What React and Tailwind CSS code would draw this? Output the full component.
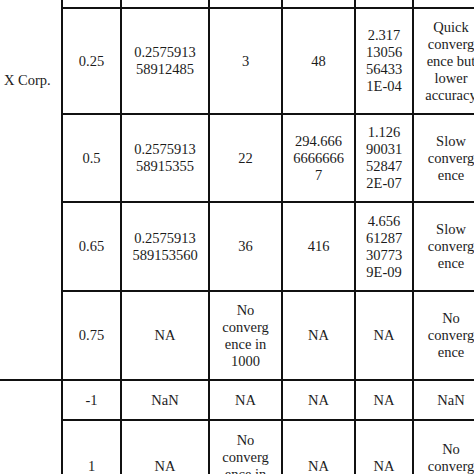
const rows = [
  { h: 'row0', cells: ['', '', '', '', '', ''] },
  {
    cells: [
      ['0.25'],
      ['0.2575913', '58912485'],
      ['3'],
      ['48'],
      ['2.317', '13056', '56433', '1E-04'],
      ['Quick', 'converg', 'ence but', 'lower', 'accuracy'],
    ],
  },
  {
    cells: [
      ['0.5'],
      ['0.2575913', '58915355'],
      ['22'],
      ['294.666', '6666666', '7'],
      ['1.126', '90031', '52847', '2E-07'],
      ['Slow', 'converg', 'ence'],
    ],
  },
  {
    cells: [
      ['0.65'],
      ['0.2575913', '589153560'],
      ['36'],
      ['416'],
      ['4.656', '61287', '30773', '9E-09'],
      ['Slow', 'converg', 'ence'],
    ],
  },
  {
    cells: [
      ['0.75'],
      ['NA'],
      ['No', 'converg', 'ence in', '1000'],
      ['NA'],
      ['NA'],
      ['No', 'converg', 'ence'],
    ],
  },
  {
    cells: [['-1'], ['NaN'], ['NA'], ['NA'], ['NA'], ['NaN']],
  },
  {
    cells: [
      ['1'],
      ['NA'],
      ['No', 'converg', 'ence in', '1000'],
      ['NA'],
      ['NA'],
      ['No', 'converg', 'ence'],
    ],
  },
];

function Cell({ lines }) {
  return (
    <div className="bg-white flex flex-col items-center justify-center text-center whitespace-nowrap">
      {Array.isArray(lines) && lines.map((l, i) => <span key={i}>{l}</span>)}
    </div>
  );
}

export default function App() {
  return (
    <div className="w-[474px] h-[474px] overflow-hidden bg-white">
      <div
        className="grid w-max gap-[2px] bg-[#111] text-[14.5px] leading-[17px] text-[#1c1c1c]"
        style={{ fontFamily: '"Liberation Serif", "Times New Roman", serif' }}
      >
        <div className="grid grid-cols-[61px_57px_86px_71px_71px_56px_74px] grid-rows-[7px_104px_86px_87px_87px_38px_90px] gap-[2px]">
          <div className="row-span-5 bg-white pt-[72px] pl-1">X Corp.</div>
          {rows.slice(0, 5).map((r, ri) =>
            r.cells.map((c, ci) => <Cell key={`${ri}-${ci}`} lines={c} />)
          )}
          <div className="row-span-2 bg-white"></div>
          {rows.slice(5).map((r, ri) =>
            r.cells.map((c, ci) => <Cell key={`b${ri}-${ci}`} lines={c} />)
          )}
        </div>
      </div>
    </div>
  );
}
